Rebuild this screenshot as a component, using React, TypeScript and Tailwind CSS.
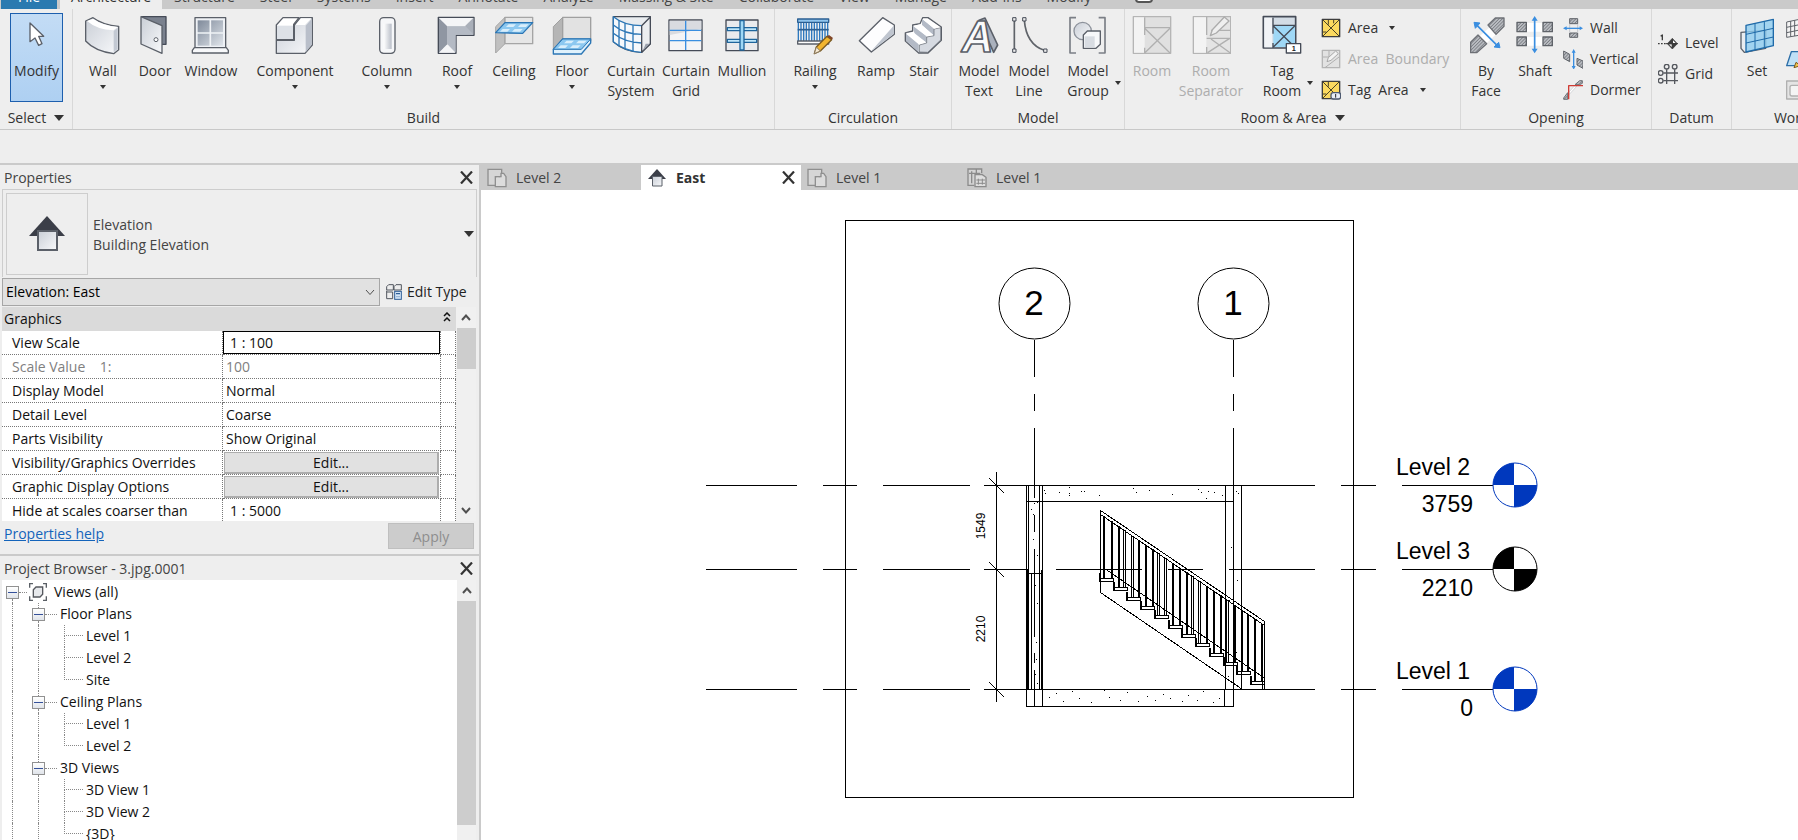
import React from 'react';

type IconProps = { children: React.ReactNode; small?: boolean };

const INK = '#5b6069';

/* Icon frames: large icons use a 120 unit grid, small ones a 60 unit grid */
function Icon({ children, small }: IconProps) {
    return (
        <svg
            className={small ? 'w-5 h-5 shrink-0' : 'w-10 h-10 shrink-0'}
            viewBox={small ? '0 0 60 60' : '0 0 120 120'}
            fill="none"
            strokeLinejoin="round"
            aria-hidden="true"
        >
            {children}
        </svg>
    );
}

function IconDefs() {
    return (
        <svg width="0" height="0" className="absolute" aria-hidden="true">
            <defs>
                <linearGradient id="face" x1="0" y1="0" x2="1" y2="1">
                    <stop offset="0" stopColor="#c9ced6" />
                    <stop offset="1" stopColor="#f8f9fb" />
                </linearGradient>
                <linearGradient id="glass" x1="0" y1="0" x2="1" y2="1">
                    <stop offset="0" stopColor="#7f8a9a" />
                    <stop offset="1" stopColor="#dfe4ea" />
                </linearGradient>
                <linearGradient id="tube" x1="0" y1="0" x2="1" y2="0">
                    <stop offset="0" stopColor="#ffffff" />
                    <stop offset="1" stopColor="#b9bec8" />
                </linearGradient>
                <pattern id="hatch" width="7" height="7" patternUnits="userSpaceOnUse" patternTransform="rotate(45)">
                    <rect width="7" height="7" fill="#b9bcc1" />
                    <rect width="2" height="7" fill="#6d7076" />
                </pattern>
            </defs>
        </svg>
    );
}

const CursorIcon = () => (
    <Icon>
        <path d="M39 24 L80 64 H65 L75 86 L65 91 L54 69 L39 80 Z" fill="#fff" stroke={INK} strokeWidth="4" />
    </Icon>
);

const WallIcon = () => (
    <Icon>
        <path d="M8 18 L30 8 Q60 30 107 34 V104 L92 116 Q35 108 8 78 Z" fill="url(#face)" stroke={INK} strokeWidth="4" />
        <path d="M12 18 L30 11 Q60 32 104 36 L91 46 Q42 44 12 18 Z" fill="#fff" />
        <path d="M92 48 V112 L104 102 V38 Z" fill="#c3c9d3" />
    </Icon>
);

const DoorIcon = () => (
    <Icon>
        <path d="M18 5 H93 V88 H80" fill="#7a818e" stroke="#454b57" strokeWidth="4" />
        <path d="M18 5 L81 32 V115 L18 87 Z" fill="url(#face)" stroke={INK} strokeWidth="4" />
        <circle cx="63" cy="74" r="6" fill="#fff" stroke={INK} strokeWidth="3" />
    </Icon>
);

const WindowIcon = () => (
    <Icon>
        <rect x="12" y="8" width="92" height="92" fill="#eef1f5" stroke={INK} strokeWidth="4" />
        <rect x="20" y="16" width="76" height="76" fill="url(#glass)" />
        <path d="M58 14 V94 M18 54 H98" stroke="#f0f3f6" strokeWidth="5" />
        <path d="M10 98 H106 L112 106 V114 H4 V106 Z" fill="#f7f8fa" stroke={INK} strokeWidth="4" />
    </Icon>
);

const ComponentIcon = () => (
    <Icon>
        <path d="M4 76 H58 V30 L76 8 H112 V90 L90 115 H4 Z" fill="url(#face)" stroke={INK} strokeWidth="4" />
        <path d="M4 30 L24 8 H72 L56 28 V74 H4 Z" fill="#fff" stroke={INK} strokeWidth="4" />
        <path d="M6 32 H54 V72 H6 Z" fill="#dde1e7" />
        <path d="M92 32 V112 L110 89 V12 Z" fill="#b9bfca" />
        <path d="M62 30 L78 10 H109 L90 30 Z" fill="#fff" />
    </Icon>
);

const ColumnIcon = () => (
    <Icon>
        <rect x="38" y="8" width="46" height="107" rx="12" fill="#f6f7f9" stroke={INK} strokeWidth="4" />
        <rect x="50" y="26" width="24" height="76" fill="url(#tube)" />
    </Icon>
);

const RoofIcon = () => (
    <Icon>
        <path d="M4 7 H111 V61 H57 V115 H4 Z" fill="#cdd1d7" stroke="#454b57" strokeWidth="4" />
        <path d="M6 9 L31 34 V88 L6 113 Z" fill="#8f96a2" />
        <path d="M6 9 H109 L84 34 H31 Z" fill="#f4f5f7" />
        <path d="M109 9 V59 L84 34 Z" fill="#a9afb9" />
        <path d="M31 34 H84 L109 59 H56 V112 L31 88 Z" fill="#b4bac4" />
        <path d="M6 113 H55 L31 88 Z" fill="#f4f5f7" />
    </Icon>
);

const CeilingIcon = () => (
    <Icon>
        <path d="M5 35 L33 7 V86 L5 114 Z" fill="#c0c0c0" stroke="#a5a5a5" strokeWidth="3" />
        <path d="M33 7 H116 V86 H33 Z" fill="#e6e6e6" stroke="#a5a5a5" strokeWidth="4" />
        <path d="M5 53 L33 23 H116 L86 55 Z" fill="#8cc8f0" stroke="#2b76b5" strokeWidth="4" />
        <path d="M44 28 H66 L58 36 H36 Z M80 28 H104 L96 36 H72 Z M26 42 H48 L40 50 H18 Z M62 42 H86 L78 50 H54 Z" fill="#d9eefb" />
    </Icon>
);

const FloorIcon = () => (
    <Icon>
        <path d="M4 35 L32 7 V75 L4 104 Z" fill="#b5b5b5" stroke="#a0a0a0" strokeWidth="3" />
        <path d="M32 7 H116 V78 H32 Z" fill="#e2e2e2" stroke="#a0a0a0" strokeWidth="4" />
        <path d="M4 103 L32 72 H116 V84 L88 117 H4 Z" fill="#dff1fc" stroke="#2b76b5" strokeWidth="4" />
        <path d="M4 103 L32 72 H116 L88 103 Z" fill="#8cc8f0" stroke="#2b76b5" strokeWidth="3" />
        <path d="M44 77 H66 L58 85 H36 Z M80 77 H104 L96 85 H72 Z M26 91 H48 L40 99 H18 Z M62 91 H86 L78 99 H54 Z" fill="#d9eefb" />
    </Icon>
);

const CurtainSystemIcon = () => (
    <Icon>
        <path d="M7 5 H118 V86 L92 112 Q40 110 7 80 Z" fill="#e9ecef" stroke="#454b57" strokeWidth="4" />
        <path d="M7 5 Q40 32 92 32 V112 Q40 108 7 80 Z" fill="#f5f8fb" stroke="#2b76b5" strokeWidth="4" />
        <path d="M24 16 V94 M42 25 V103 M66 31 V109 M7 30 Q40 58 92 58 M7 55 Q40 82 92 84" stroke="#2b76b5" strokeWidth="4" />
        <path d="M92 32 L118 6 V86 L92 112 Z" fill="#eceef0" stroke="#454b57" strokeWidth="4" />
        <path d="M95 108 L116 86 H104 Z" fill="#9aa1ad" />
    </Icon>
);

const CurtainGridIcon = () => (
    <Icon>
        <rect x="9" y="15" width="99" height="92" fill="#f4f4f6" stroke="#454b57" strokeWidth="4" />
        <path d="M11 17 H106 V42 L11 60 Z" fill="#d9dbe0" />
        <path d="M59 17 V105 M11 46 H106 M11 77 H106" stroke="#3a8ee0" strokeWidth="4" />
    </Icon>
);

const MullionIcon = () => (
    <Icon>
        <rect x="12" y="15" width="96" height="92" fill="#e9eaed" stroke="#454b57" strokeWidth="4" />
        <path d="M16 38 H104 V47 H16 Z M16 73 H104 V82 H16 Z" fill="#bfe6fa" stroke="#1f659c" strokeWidth="4" />
        <path d="M54 17 H66 V105 H54 Z" fill="#9fd8f6" stroke="#1f659c" strokeWidth="4" />
    </Icon>
);

const Pencil = () => (
    <g>
        <path d="M58 116 L64 96 L96 64 L110 74 L76 108 Z" fill="#f2b52f" stroke="#7b5a20" strokeWidth="4" />
        <path d="M58 116 L64 96 L76 108 Z" fill="#f8ead2" stroke="#8a7a60" strokeWidth="3" />
        <path d="M96 64 L102 60 L114 69 L110 74 Z" fill="#804527" />
    </g>
);

const RailingIcon = () => (
    <Icon>
        <path d="M10 24 V80 M18 24 V80 M26 24 V80 M34 24 V80 M42 24 V80 M50 24 V80 M58 24 V80 M66 24 V80 M74 24 V80 M82 24 V80 M90 24 V80 M98 24 V80" stroke="#2f79bf" strokeWidth="4" />
        <rect x="8" y="12" width="93" height="10" fill="#8fc4ee" stroke="#2b5f93" strokeWidth="4" />
        <path d="M8 44 H101" stroke="#2b5f93" strokeWidth="5" />
        <rect x="8" y="78" width="93" height="9" fill="#fff" stroke={INK} strokeWidth="4" />
        <Pencil />
    </Icon>
);

const RampIcon = () => (
    <Icon>
        <path d="M10 77 L80 8 L115 30 V58 L46 111 Z" fill="#fdfdfe" stroke={INK} strokeWidth="4" />
        <path d="M46 108 L113 32 V57 Z" fill="#bfc5cf" />
    </Icon>
);

const StairIcon = () => (
    <Icon>
        <path d="M4 54 L26 48 V30 L48 26 L56 8 H72 L112 36 V76 L72 114 H44 L4 78 Z" fill="#fff" stroke={INK} strokeWidth="4" />
        <path d="M6 56 L44 88 V111 L6 78 Z M26 32 L68 64 V84 L32 58 Z M54 12 L90 40 V62 L54 30 Z" fill="#b3bac6" />
        <path d="M46 111 V90 L68 84 V66 L90 62 V42 L110 38 V75 L71 112 Z" fill="#d6dae1" stroke={INK} strokeWidth="2" />
        <path d="M6 54 L28 52 L66 82 L46 88 Z M50 28 L88 60 L68 64 L30 32 Z M72 12 L108 37 L90 41 L56 12 Z" fill="#fff" />
    </Icon>
);

const ModelTextIcon = () => (
    <Icon>
        <path d="M60 16 L78 9 L116 90 L104 112 Z" fill="#aab1bd" stroke={INK} strokeWidth="5" />
        <text x="8" y="112" fontFamily="Liberation Sans, Arial, sans-serif" fontWeight="700" fontStyle="italic" fontSize="132" fill="#fafbfc" stroke={INK} strokeWidth="5">
            A
        </text>
    </Icon>
);

const ModelLineIcon = () => (
    <Icon>
        <path d="M16 16 V104 M46 16 Q52 88 106 106" stroke="#5f6369" strokeWidth="5" />
        <path d="M11 8 H21 V18 H11 Z M11 102 H21 V112 H11 Z M41 8 H51 V18 H41 Z M104 102 H114 V112 H104 Z" fill="#eee" stroke="#454b57" strokeWidth="3" />
    </Icon>
);

const ModelGroupIcon = () => (
    <Icon>
        <path d="M24 8 H6 V114 H24 M92 8 H111 V114 H92" stroke="#7b7f86" strokeWidth="5" />
        <circle cx="44" cy="48" r="26" fill="url(#face)" stroke="#8d929b" strokeWidth="4" />
        <path d="M46 60 L58 48 H97 V88 L84 100 H46 Z" fill="#f7f8fa" stroke={INK} strokeWidth="4" />
        <path d="M50 64 H80 V97 H50 Z" fill="#d8dce2" />
    </Icon>
);

const RoomIcon = () => (
    <Icon>
        <rect x="4" y="5" width="112" height="110" fill="#e0e0e0" stroke="#b5b5b5" strokeWidth="4" />
        <path d="M6 7 H38 V113 H6 Z" fill="#f3f3f3" />
        <path d="M38 7 V60 M38 98 V115 M38 38 H114 M38 40 L114 114 M114 40 L38 114" stroke="#b0b0b0" strokeWidth="4" />
    </Icon>
);

const RoomSeparatorIcon = () => (
    <Icon>
        <rect x="7" y="5" width="112" height="110" fill="#e4e4e4" stroke="#b5b5b5" strokeWidth="4" />
        <path d="M9 7 H46 V113 H9 Z" fill="#f3f3f3" />
        <path d="M47 5 V60 M47 96 V115 M60 46 H118 M47 70 H118 M50 113 L116 70 M60 72 L118 114" stroke="#b0b0b0" strokeWidth="4" />
        <path d="M58 62 L64 44 L100 6 L114 18 L76 54 Z" fill="#efefef" stroke="#acacac" strokeWidth="4" />
    </Icon>
);

const TagRoomIcon = () => (
    <Icon>
        <rect x="4" y="5" width="97" height="94" fill="#d3dce5" stroke="#454b57" strokeWidth="5" />
        <path d="M7 8 H31 V97 H7 Z" fill="#f1f3f6" />
        <path d="M34 32 H99 V96 H34 Z" fill="#9fd8f6" />
        <path d="M33 8 V56 M33 84 V98 M33 31 H99 M34 33 L98 96 M98 33 L34 96" stroke="#454b57" strokeWidth="4" />
        <rect x="73" y="86" width="43" height="28" fill="#fff" stroke="#454b57" strokeWidth="4" />
        <text x="95" y="108" textAnchor="middle" fontFamily="Liberation Sans, Arial, sans-serif" fontWeight="700" fontSize="22" fill="#222">
            1
        </text>
    </Icon>
);

const ByFaceIcon = () => (
    <Icon>
        <path d="M34 70 L72 36 L90 58 L56 90 Z" fill="#fff" />
        <path d="M14 82 L36 60 L62 86 L32 113 H14 Z M66 30 L88 9 H114 V34 L90 58 Z" fill="url(#hatch)" stroke="#6d7076" strokeWidth="4" />
        <path d="M30 28 L94 92" stroke="#3a8ee0" strokeWidth="5" />
        <path d="M24 22 L42 24 L28 40 Z M102 98 L84 96 L98 82 Z" fill="#3a8ee0" stroke="#3a8ee0" strokeWidth="3" />
    </Icon>
);

const ShaftIcon = () => (
    <Icon>
        <path d="M34 24 H84 V50 H34 Z M34 66 H84 V92 H34 Z" fill="#fff" />
        <path d="M6 22 H34 V50 H6 Z M84 22 H112 V50 H84 Z M6 66 H34 V92 H6 Z M84 66 H112 V92 H84 Z" fill="url(#hatch)" stroke="#5f6369" strokeWidth="4" />
        <path d="M59 10 V108" stroke="#3a8ee0" strokeWidth="5" />
        <path d="M59 3 L68 17 H50 Z M59 115 L68 101 H50 Z" fill="#3a8ee0" />
    </Icon>
);

const SetPlaneIcon = () => (
    <Icon>
        <path d="M12 52 L86 46 V100 L22 112 L12 100 Z" fill="#e8ecf0" stroke={INK} strokeWidth="4" />
        <path d="M27 31 L109 13 V92 L27 111 Z" fill="#8fcdf0" fillOpacity="0.8" stroke="#1f6aa8" strokeWidth="4" />
        <path d="M54 25 V105 M82 19 V98 M27 58 L109 40 M27 84 L109 66" stroke="#1f6aa8" strokeWidth="3" />
    </Icon>
);

const AreaIcon = () => (
    <Icon small>
        <rect x="4" y="4" width="52" height="52" fill="#fbd95f" stroke="#3d3d3d" strokeWidth="4" />
        <path d="M6 6 L54 54 M54 6 L6 54 M22 6 V20 M38 6 V16 M6 42 H16" stroke="#4a4326" strokeWidth="3" />
    </Icon>
);

const AreaBoundaryIcon = () => (
    <Icon small>
        <rect x="4" y="4" width="52" height="52" fill="#e2e2e2" stroke="#b5b5b5" strokeWidth="4" />
        <path d="M6 24 H24 M12 56 L54 24 M24 6 V24" stroke="#b0b0b0" strokeWidth="3" />
        <path d="M18 38 L22 26 L44 6 L52 14 L30 34 Z" fill="#f3f3f3" stroke="#a8a8a8" strokeWidth="3" />
    </Icon>
);

const TagAreaIcon = () => (
    <Icon small>
        <rect x="4" y="4" width="52" height="52" fill="#fbd95f" stroke="#3d3d3d" strokeWidth="4" />
        <path d="M6 6 L54 54 M54 6 L6 54 M22 6 V20 M6 42 H16" stroke="#4a4326" strokeWidth="3" />
        <rect x="30" y="38" width="29" height="19" rx="7" fill="#e8eef8" stroke="#4d5a70" strokeWidth="4" />
        <path d="M44 42 V53" stroke="#222" strokeWidth="3" />
    </Icon>
);

const WallOpeningIcon = () => (
    <Icon small>
        <path d="M20 2 H44 V17 H20 Z M20 45 H44 V58 H20 Z" fill="url(#hatch)" stroke="#5f6369" strokeWidth="3" />
        <path d="M20 18 V44 M44 18 V44" stroke="#c4c7cc" strokeWidth="3" />
        <path d="M8 31 H54" stroke="#3a8ee0" strokeWidth="4" />
        <path d="M0 31 L11 25 V37 Z M60 31 L50 25 V37 Z" fill="#3a8ee0" />
    </Icon>
);

const VerticalOpeningIcon = () => (
    <Icon small>
        <path d="M2 6 L20 16 V38 L2 28 Z M42 28 L60 36 V58 L42 48 Z" fill="url(#hatch)" stroke="#5f6369" strokeWidth="3" />
        <path d="M32 6 V56" stroke="#3a8ee0" strokeWidth="4" />
        <path d="M32 0 L38 11 H26 Z M32 62 L38 51 H26 Z" fill="#3a8ee0" />
    </Icon>
);

const DormerIcon = () => (
    <Icon small>
        <path d="M2 54 L14 38 V58 H2 Z M36 14 L50 2 H58 V10 L50 14 Z" fill="url(#hatch)" stroke="#6d7076" strokeWidth="3" />
        <path d="M18 36 L34 18 H42 L18 44 Z" fill="#fff" stroke="#c4c7cc" strokeWidth="2" />
        <path d="M17 58 V17 H60" stroke="#cf3b34" strokeWidth="4" />
    </Icon>
);

const LevelIcon = () => (
    <Icon small>
        <path d="M0 32 H26" stroke="#3d3d3d" strokeWidth="4" strokeDasharray="5 4" />
        <path d="M8 10 L13 6 V22" stroke="#3d3d3d" strokeWidth="4" />
        <path d="M43 16 L58 32 L43 48 L28 32 Z" fill="#3d3d3d" stroke="#3d3d3d" strokeWidth="2" />
        <path d="M45 22 L53 30 H45 Z M41 42 L33 34 H41 Z" fill="#fff" />
        <path d="M24 32 H60" stroke="#3d3d3d" strokeWidth="3" />
    </Icon>
);

const GridIcon = () => (
    <Icon small>
        <circle cx="26" cy="8" r="7" stroke="#55585e" strokeWidth="4" />
        <circle cx="50" cy="8" r="7" stroke="#55585e" strokeWidth="4" />
        <circle cx="8" cy="27" r="7" stroke="#55585e" strokeWidth="4" />
        <circle cx="8" cy="50" r="7" stroke="#55585e" strokeWidth="4" />
        <path d="M26 16 V60 M50 16 V60 M16 27 H60 M16 50 H60" stroke="#55585e" strokeWidth="4" />
    </Icon>
);

const ShowPlaneIcon = () => (
    <Icon small>
        <path d="M2 12 L50 2 V50 L2 58 Z M14 9 V56 M26 7 V54 M38 4 V52 M2 28 L50 18 M2 44 L50 34" fill="#f4f4f4" stroke="#5f6369" strokeWidth="3" />
    </Icon>
);

const RefPlaneIcon = () => (
    <Icon small>
        <path d="M2 50 L16 8 H58 L46 50 Z" fill="#bfe0f6" stroke="#2b6ea8" strokeWidth="4" />
        <path d="M24 56 L30 40 L44 50 Z" fill="#f2c24a" stroke="#7b5a20" strokeWidth="3" />
    </Icon>
);

const ViewerIcon = () => (
    <Icon small>
        <rect x="2" y="3" width="56" height="54" fill="#e4e4e4" stroke="#b0b0b0" strokeWidth="4" />
        <rect x="12" y="16" width="44" height="32" rx="6" fill="#f4f4f4" stroke="#b0b0b0" strokeWidth="4" />
    </Icon>
);

const Caret = ({ large }: { large?: boolean }) => (
    <svg className={large ? 'w-[10px] h-[6px]' : 'w-[6px] h-[4px]'} viewBox="0 0 6 4" preserveAspectRatio="none" aria-hidden="true">
        <path d="M0 0 H6 L3 4 Z" fill="#333" />
    </svg>
);

const CloseIcon = () => (
    <svg className="w-[13px] h-[13px]" viewBox="0 0 13 13" aria-hidden="true">
        <path d="M1 0.5 L12 12.5 M12 0.5 L1 12.5" stroke="#333" strokeWidth="2.2" />
    </svg>
);

const Chevron = ({ up, thick }: { up?: boolean; thick?: boolean }) => (
    <svg className="w-[10px] h-[7px]" viewBox="0 0 10 7" fill="none" aria-hidden="true">
        <path d={up ? 'M1 6 L5 1.5 L9 6' : 'M1 1 L5 5.5 L9 1'} stroke="#505050" strokeWidth={thick ? 2 : 1} />
    </svg>
);

/* ---------- Ribbon ---------- */

const menuTabs = ['Structure', 'Steel', 'Systems', 'Insert', 'Annotate', 'Analyze', 'Massing & Site', 'Collaborate', 'View', 'Manage', 'Add-Ins', 'Modify'];

function MenuTabs() {
    return (
        <nav className="h-[9px] shrink-0 overflow-hidden bg-[#cacaca] flex items-end text-sm leading-5 text-[#444] whitespace-nowrap">
            <a href="#file" className="ml-px w-14 bg-[#2a7ab0] text-white text-center pb-0.5">File</a>
            <a href="#architecture" className="ml-[3px] w-[102px] bg-[#eee] text-[#333] text-center pb-0.5">Architecture</a>
            <div className="flex gap-[25px] pl-3 pb-0.5">
                {menuTabs.map((tab) => (
                    <a key={tab} href="#tab">{tab}</a>
                ))}
            </div>
            <button type="button" aria-label="Ribbon options" className="ml-11 mb-1.5 w-[18px] h-3 border-2 border-[#555] rounded-sm bg-white"></button>
        </nav>
    );
}

function Panel({ title, className, children, menu }: { title: string; className: string; children: React.ReactNode; menu?: boolean }) {
    return (
        <section className={`${className} shrink-0 flex flex-col border-r border-[#d8d8d8] pt-[3px]`}>
            <div className="h-24 flex">{children}</div>
            <div className="h-5 flex items-center justify-center gap-2 text-sm leading-5 whitespace-nowrap">
                {title}
                {menu && <Caret large />}
            </div>
        </section>
    );
}

type ToolProps = { icon: React.ReactNode; label: string; second?: string; width: string; drop?: boolean; disabled?: boolean };

function Tool({ icon, label, second, width, drop, disabled }: ToolProps) {
    return (
        <button type="button" disabled={disabled} className={`${width} shrink-0 pt-[3px] flex flex-col items-center text-sm leading-5 whitespace-nowrap ${disabled ? 'text-[#adadad]' : 'text-[#333]'}`}>
            {icon}
            <span className="mt-1.5">{label}</span>
            {second && (
                <span className="relative">
                    {second}
                    {drop && <span className="absolute left-full top-0 pl-1.5 leading-none"><Caret /></span>}
                </span>
            )}
            {drop && !second && <span className="mt-1"><Caret /></span>}
        </button>
    );
}

function SmallTool({ icon, label, drop, disabled }: { icon: React.ReactNode; label: string; drop?: boolean; disabled?: boolean }) {
    return (
        <button type="button" disabled={disabled} className={`h-[31px] flex items-center gap-[7px] text-sm whitespace-pre ${disabled ? 'text-[#adadad]' : 'text-[#333]'}`}>
            {icon}
            <span>{label}</span>
            {drop && <span className="ml-1"><Caret /></span>}
        </button>
    );
}

function Ribbon() {
    return (
        <div className="h-[121px] shrink-0 flex overflow-hidden border-b border-[#c8c8c8] bg-[#eee]">
            <Panel title="Select" className="w-[73px]" menu>
                <button type="button" className="mt-px ml-[10px] w-[53px] h-[89px] pt-px flex flex-col items-center border border-[#1d5fae] bg-linear-to-b from-[#c3dcf5] to-[#aed0f2] text-sm leading-5">
                    <CursorIcon />
                    <span className="mt-1.5">Modify</span>
                </button>
            </Panel>
            <Panel title="Build" className="w-[702px]">
                <Tool icon={<WallIcon />} label="Wall" width="w-[60px]" drop />
                <Tool icon={<DoorIcon />} label="Door" width="w-11" />
                <Tool icon={<WindowIcon />} label="Window" width="w-[68px]" />
                <Tool icon={<ComponentIcon />} label="Component" width="w-[100px]" drop />
                <Tool icon={<ColumnIcon />} label="Column" width="w-[84px]" drop />
                <Tool icon={<RoofIcon />} label="Roof" width="w-14" drop />
                <Tool icon={<CeilingIcon />} label="Ceiling" width="w-[58px]" />
                <Tool icon={<FloorIcon />} label="Floor" width="w-[58px]" drop />
                <Tool icon={<CurtainSystemIcon />} label="Curtain" second="System" width="w-[60px]" />
                <Tool icon={<CurtainGridIcon />} label="Curtain" second="Grid" width="w-[50px]" />
                <Tool icon={<MullionIcon />} label="Mullion" width="w-[62px]" />
            </Panel>
            <Panel title="Circulation" className="w-[177px]">
                <Tool icon={<RailingIcon />} label="Railing" width="w-20" drop />
                <Tool icon={<RampIcon />} label="Ramp" width="w-[42px]" />
                <Tool icon={<StairIcon />} label="Stair" width="w-[54px]" />
            </Panel>
            <Panel title="Model" className="w-[173px]">
                <Tool icon={<ModelTextIcon />} label="Model" second="Text" width="w-[54px]" />
                <Tool icon={<ModelLineIcon />} label="Model" second="Line" width="w-[46px]" />
                <Tool icon={<ModelGroupIcon />} label="Model" second="Group" width="w-[72px]" drop />
            </Panel>
            <Panel title="Room &amp; Area" className="w-[336px]" menu>
                <Tool icon={<RoomIcon />} label="Room" width="w-[54px]" disabled />
                <Tool icon={<RoomSeparatorIcon />} label="Room" second="Separator" width="w-16" disabled />
                <Tool icon={<TagRoomIcon />} label="Tag" second="Room" width="w-[78px]" drop />
                <div className="flex flex-col items-start">
                    <SmallTool icon={<AreaIcon />} label="Area" drop />
                    <SmallTool icon={<AreaBoundaryIcon />} label="Area  Boundary" disabled />
                    <SmallTool icon={<TagAreaIcon />} label="Tag  Area" drop />
                </div>
            </Panel>
            <Panel title="Opening" className="w-[191px]">
                <Tool icon={<ByFaceIcon />} label="By" second="Face" width="w-[50px]" />
                <Tool icon={<ShaftIcon />} label="Shaft" width="w-12" />
                <div className="flex flex-col items-start pl-1">
                    <SmallTool icon={<WallOpeningIcon />} label="Wall" />
                    <SmallTool icon={<VerticalOpeningIcon />} label="Vertical" />
                    <SmallTool icon={<DormerIcon />} label="Dormer" />
                </div>
            </Panel>
            <Panel title="Datum" className="w-20">
                <div className="flex flex-col items-start pl-1.5 pt-[15px]">
                    <SmallTool icon={<LevelIcon />} label="Level" />
                    <SmallTool icon={<GridIcon />} label="Grid" />
                </div>
            </Panel>
            <Panel title="Work Plane" className="w-[159px]">
                <Tool icon={<SetPlaneIcon />} label="Set" width="w-[50px]" />
                <div className="flex flex-col items-start pl-1">
                    <SmallTool icon={<ShowPlaneIcon />} label="Show" />
                    <SmallTool icon={<RefPlaneIcon />} label="Ref Plane" />
                    <SmallTool icon={<ViewerIcon />} label="Viewer" />
                </div>
            </Panel>
        </div>
    );
}

/* ---------- Left dock ---------- */

const HouseIcon = ({ className }: { className: string }) => (
    <svg className={className} viewBox="0 0 36 36" aria-hidden="true">
        <path d="M18 0 L36 20 H0 Z" fill="#3b3e48" />
        <path d="M9 15 H28 V34 H9 Z" fill="url(#face)" stroke={INK} strokeWidth="2" />
    </svg>
);

const PaletteHeader = ({ title }: { title: string }) => (
    <header className="h-6 shrink-0 flex items-center justify-between pl-1 pr-[6px] text-sm leading-5 text-[#444]">
        <h2 className="pt-0.5">{title}</h2>
        <button type="button" aria-label={`Close ${title}`}><CloseIcon /></button>
    </header>
);

type Property = { label: string; value: string; kind?: 'input' | 'button' | 'muted' | 'indent' };

const properties: Property[] = [
    { label: 'View Scale', value: '1 : 100', kind: 'input' },
    { label: 'Scale Value    1:', value: '100', kind: 'muted' },
    { label: 'Display Model', value: 'Normal' },
    { label: 'Detail Level', value: 'Coarse' },
    { label: 'Parts Visibility', value: 'Show Original' },
    { label: 'Visibility/Graphics Overrides', value: 'Edit...', kind: 'button' },
    { label: 'Graphic Display Options', value: 'Edit...', kind: 'button' },
    { label: 'Hide at scales coarser than', value: '1 : 5000', kind: 'indent' },
];

function PropertyValue({ label, value, kind }: Property) {
    if (kind === 'input') {
        return <input aria-label={label} defaultValue={value} className="block w-full h-[23px] border border-black bg-white pl-1.5 text-sm" />;
    }
    if (kind === 'button') {
        return <button type="button" aria-label={`${label}: ${value}`} className="block ml-px w-[215px] h-[22px] border border-r-2 border-b-2 border-[#adadad] bg-[#e1e1e1] leading-5">{value}</button>;
    }
    return <span className={kind === 'indent' ? 'pl-[7px]' : 'pl-[3px]'}>{value}</span>;
}

function PropertiesPalette() {
    return (
        <section className="shrink-0 flex flex-col border-b-2 border-[#cacaca]">
            <PaletteHeader title="Properties" />
            <div className="mx-0.5 h-[88px] flex items-start pt-[3px] pl-[3px] pr-0.5 border border-b-0 border-[#cdcdcd]">
                <div className="w-[82px] h-[82px] flex items-center justify-center border border-[#cdcdcd]">
                    <HouseIcon className="w-9 h-9" />
                </div>
                <p className="pl-[5px] pt-[22px] flex-1 text-sm leading-5 text-[#444]">
                    Elevation
                    <br />
                    Building Elevation
                </p>
                <button type="button" aria-label="Change type" className="pt-[38px]"><Caret large /></button>
            </div>
            <div className="ml-0.5 h-[30px] flex items-start pt-px">
                <div className="grid w-[378px] items-center">
                    <select aria-label="Element" className="col-start-1 row-start-1 appearance-none h-7 border border-[#a6a6a6] bg-[#e1e1e1] pl-[3px] text-sm text-black">
                        <option>Elevation: East</option>
                    </select>
                    <span className="col-start-1 row-start-1 justify-self-end pr-[5px] pointer-events-none"><Chevron /></span>
                </div>
                <button type="button" className="ml-1.5 mt-1 flex items-center gap-[5px] text-sm leading-5 text-[#222] whitespace-nowrap">
                    <svg className="w-4 h-4" viewBox="0 0 48 48" fill="none" stroke="#51565e" strokeWidth="3" aria-hidden="true">
                        <path d="M2 8 L8 2 H22 V18 H2 Z M24 8 L30 2 H46 V18 H24 Z M2 20 V44 H20 V24 H2" />
                        <rect x="26" y="22" width="20" height="24" fill="#d5e6f7" stroke="#2f5f97" />
                        <path d="M30 29 H42 M32 38 H34 M38 38 H40" stroke="#2f5f97" strokeWidth="4" />
                    </svg>
                    Edit Type
                </button>
            </div>
            <div className="ml-0.5 mr-[3px] h-[214px] flex overflow-hidden">
                <div className="flex-1 bg-white">
                    <table className="w-full table-fixed border-separate border-spacing-0 text-sm leading-5 text-[#111]">
                        <colgroup>
                            <col />
                            <col className="w-[218px]" />
                            <col className="w-[15px]" />
                        </colgroup>
                        <thead>
                            <tr>
                                <th colSpan={2} className="h-6 p-0 pl-0.5 bg-[#dadada] text-left font-normal">Graphics</th>
                                <th className="h-6 p-0 pb-1 bg-[#dadada]">
                                    <button type="button" aria-label="Collapse Graphics" className="block">
                                        <svg className="w-3 h-[10px]" viewBox="0 0 12 10" fill="none" stroke="#111" strokeWidth="1.5" aria-hidden="true">
                                            <path d="M3 4 L6 1 L9 4 M3 9 L6 6 L9 9" />
                                        </svg>
                                    </button>
                                </th>
                            </tr>
                        </thead>
                        <tbody>
                            {properties.map((p) => (
                                <tr key={p.label} className={p.kind === 'muted' ? 'text-[#808080]' : ''}>
                                    <td className="h-6 p-0 pl-[10px] whitespace-pre border-b border-r border-dotted border-[#777]">{p.label}</td>
                                    <td className="h-6 p-0 border-b border-r border-dotted border-[#777]"><PropertyValue {...p} /></td>
                                    <td className="h-6 p-0 border-b border-r border-dotted border-[#777]"></td>
                                </tr>
                            ))}
                        </tbody>
                    </table>
                </div>
                <div className="w-5 flex flex-col items-center bg-[#f0f0f0]">
                    <button type="button" aria-label="Scroll up" className="h-[21px] flex items-center"><Chevron up thick /></button>
                    <div className="w-[19px] h-[41px] bg-[#cdcdcd]"></div>
                    <button type="button" aria-label="Scroll down" className="mt-auto h-[22px] flex items-center"><Chevron thick /></button>
                </div>
            </div>
            <footer className="h-[33px] flex items-start justify-between pl-1 pr-[5px] text-sm leading-5">
                <a href="#help" className="pt-[3px] text-[#1464bb] underline">Properties help</a>
                <button type="button" disabled className="mt-0.5 w-[86px] h-[26px] pt-0.5 border border-[#bfbfbf] bg-[#ccc] text-[#8e8e8e]">Apply</button>
            </footer>
        </section>
    );
}

const tree = [
    { name: 'Floor Plans', views: ['Level 1', 'Level 2', 'Site'] },
    { name: 'Ceiling Plans', views: ['Level 1', 'Level 2'] },
    { name: '3D Views', views: ['3D View 1', '3D View 2', '{3D}'] },
];

const Guide = ({ className }: { className: string }) => <span className={`${className} border-[#888] border-dotted`}></span>;

function Toggle({ root }: { root?: boolean }) {
    return (
        <span className="w-[13px] h-full flex flex-col items-center">
            <Guide className={root ? 'flex-1' : 'flex-1 border-l'} />
            <button type="button" aria-label="Collapse" className="w-[13px] h-[13px] flex items-center justify-center border border-[#919191] bg-linear-to-b from-white to-[#e0e4ea]">
                <span className="w-[9px] h-px bg-[#34509a]"></span>
            </button>
            <Guide className="flex-1 border-l" />
        </span>
    );
}

function ProjectBrowser() {
    return (
        <section className="flex-1 min-h-0 flex flex-col">
            <PaletteHeader title="Project Browser - 3.jpg.0001" />
            <div className="flex-1 min-h-0 flex ml-0.5 mr-[3px]">
                <div className="flex-1 overflow-hidden bg-white pl-1 pt-px text-sm text-[#111] whitespace-nowrap">
                    <div className="h-[22px] flex items-center">
                        <Toggle root />
                        <Guide className="w-2 border-t" />
                        <svg className="ml-0.5 w-[18px] h-[18px]" viewBox="0 0 54 54" fill="none" aria-hidden="true">
                            <path d="M2 14 V2 H12 M42 2 H52 V14 M52 40 V52 H42 M12 52 H2 V40" stroke="#5a5f66" strokeWidth="4" />
                            <path d="M13 20 L21 12 H41 V34 L33 42 H13 Z" fill="#e7e9ec" stroke="#55585e" strokeWidth="4" />
                        </svg>
                        <span className="pl-[7px]">Views (all)</span>
                    </div>
                    <ul>
                        {tree.map((group) => (
                            <li key={group.name}>
                                <div className="h-[22px] flex items-center pl-1.5">
                                    <Guide className="h-full w-5 border-l" />
                                    <Toggle />
                                    <Guide className="w-3 border-t" />
                                    <span className="pl-[3px]">{group.name}</span>
                                </div>
                                <ul>
                                    {group.views.map((view, i) => (
                                        <li key={view} className="h-[22px] flex items-center pl-1.5">
                                            <Guide className="h-full w-[26px] border-l" />
                                            <Guide className="h-full w-[26px] border-l" />
                                            <span className="h-full w-[19px] flex flex-col">
                                                <Guide className="h-[11px] border-l border-b" />
                                                <Guide className={i < group.views.length - 1 ? 'h-[11px] border-l' : 'h-[11px]'} />
                                            </span>
                                            <span className="pl-[3px]">{view}</span>
                                        </li>
                                    ))}
                                </ul>
                            </li>
                        ))}
                    </ul>
                </div>
                <div className="w-[19px] flex flex-col items-center bg-[#f0f0f0]">
                    <button type="button" aria-label="Scroll up" className="h-[21px] flex items-center"><Chevron up thick /></button>
                    <div className="w-full flex-1 bg-[#cdcdcd]"></div>
                    <div className="h-[15px]"></div>
                </div>
            </div>
        </section>
    );
}

/* ---------- View area ---------- */

const PlanIcon = () => (
    <svg className="w-5 h-5" viewBox="0 0 60 60" fill="none" stroke="#8f8f8f" strokeWidth="4" aria-hidden="true">
        <path d="M24 52 H3 V4 H44 V16" fill="#d6d6d6" />
        <path d="M25 26 V56 H57 V26 L50 16 H42 V26 Z" fill="#dcdcdc" />
        <path d="M25 26 H42" strokeDasharray="6 3" />
    </svg>
);

const SheetIcon = () => (
    <svg className="w-5 h-5" viewBox="0 0 60 60" fill="none" stroke="#8b8b8b" strokeWidth="4" aria-hidden="true">
        <path d="M22 52 H3 V3 H44 V16 M14 10 V46 M6 16 H40 M28 4 V14" fill="#d4d4d4" />
        <path d="M24 56 V20 H46 L57 28 V56 Z" fill="#dedede" />
        <path d="M34 32 V50 M46 32 V50 M28 36 H54 M28 46 H54" strokeWidth="3" />
    </svg>
);

const viewTabs = [
    { title: 'Level 2', icon: <PlanIcon /> },
    { title: 'East', icon: <HouseIcon className="w-5 h-[18px]" />, active: true },
    { title: 'Level 1', icon: <PlanIcon /> },
    { title: 'Level 1', icon: <SheetIcon /> },
];

const levels = [
    { name: 'Level 2', height: '3759', y: 485, color: '#0038bd' },
    { name: 'Level 3', height: '2210', y: 569, color: '#000' },
    { name: 'Level 1', height: '0', y: 689, color: '#0038bd' },
];

// x position and style (1 = solid, 2 = outlined) of every baluster
const balusters = [
    [1103, 1], [1111, 1], [1118, 1], [1124, 2], [1132, 2], [1138, 1], [1145, 1], [1152, 1],
    [1158, 2], [1165, 2], [1172, 1], [1179, 1], [1186, 1], [1192, 2], [1199, 2], [1206, 1],
    [1213, 1], [1220, 1], [1227, 2], [1234, 1], [1241, 1], [1247, 1], [1254, 1],
];

const treads = Array.from({ length: 12 }, (_, i) => ({
    x: Math.round(1099 + i * 13.73),
    y: Math.round(578 + i * 9.33),
}));

const railY = (x: number) => Math.round(514 + (x - 1100) * 0.679);
const treadY = (x: number) => treads[Math.min(11, Math.max(0, Math.floor((x - 1099) / 13.73)))].y;

const specks = [
    [1044, 490], [1045, 493], [1059, 492], [1069, 487], [1069, 493], [1069, 495], [1081, 491], [1084, 491], [1099, 495],
    [1133, 488], [1136, 492], [1149, 490], [1163, 485], [1172, 494], [1198, 489], [1201, 492], [1208, 491], [1214, 492],
    [1206, 498], [1222, 495], [1236, 491], [1238, 493], [1233, 507], [1231, 547], [1237, 580], [1229, 600], [1235, 622],
    [1236, 652], [1228, 676], [1031, 509], [1033, 514], [1034, 503], [1037, 502], [1033, 539], [1037, 555], [1035, 585],
    [1037, 603], [1034, 624], [1036, 642], [1036, 659], [1035, 674], [1037, 683], [1049, 697], [1056, 693], [1063, 701],
    [1072, 691], [1079, 698], [1091, 702], [1104, 690], [1109, 697], [1120, 700], [1127, 692], [1138, 701], [1147, 696],
    [1155, 700], [1163, 694], [1170, 698], [1182, 701], [1188, 695], [1197, 700], [1203, 691], [1213, 702], [1219, 698],
];

function ElevationDrawing() {
    return (
        <svg className="block w-full" viewBox="481 190 1317 650" role="img" aria-label="East elevation" fontFamily="Liberation Sans, Arial, sans-serif">
            <g transform="translate(0.5 0.5)" stroke="#000" fill="none" strokeLinecap="square" shapeRendering="crispEdges">
                <rect x="845" y="220" width="508" height="577" />

                {/* Level lines */}
                <path d="M706 485 H796 M823 485 H856 M883 485 H969 M984 485 H1314 M1341 485 H1375 M1402 485 H1493" />
                <path d="M706 569 H796 M823 569 H856 M883 569 H969 M984 569 H1028 M1056 569 H1141 M1168 569 H1202 M1229 569 H1314 M1341 569 H1375 M1402 569 H1493" />
                <path d="M706 689 H796 M823 689 H856 M883 689 H969 M984 689 H1314 M1341 689 H1375 M1402 689 H1493" />

                {/* Grid lines */}
                <path d="M1034 340 V376 M1034 394 V410 M1034 428 V497 M1034 515 V531 M1034 549 V636 M1034 653 V662 M1034 670 V706" />
                <path d="M1233 340 V376 M1233 394 V410 M1233 428 V706" />

                {/* Dimension string */}
                <path d="M996 472 V701" />
                <path d="M989 478 L1003 492 M989 562 L1003 576 M989 682 L1003 696" />

                {/* Walls and slabs */}
                <path d="M1026 485 V706 H1233 M1028 485 V569 M1039 485 V689 M1042 485 V706 M1026 501 H1233" />
                <path d="M1031 573 V689 M1026 573 H1042 M1225 485 V689 M1224 689 V706 M1241 485 V689" />
                <path d="M1027 570 V688 M1041 570 V688" strokeWidth="2" />

                {/* Stair */}
                <path d="M1100 592 V510 L1264 621 V689 M1262 624 V689 M1100 514 L1264 625 M1100 592 L1242 689 M1107 570 L1263 677" />
                {treads.map((t) => (
                    <g key={t.x}>
                        <rect x={t.x} y={t.y} width="14" height="3" />
                        <path d={`M${t.x} ${t.y - 5} V${t.y + 2}`} strokeWidth="2" />
                    </g>
                ))}
                {balusters.map(([x, kind]) =>
                    kind === 1 ? (
                        <path key={x} d={`M${x} ${railY(x)} V${treadY(x) - 1}`} strokeWidth="2" />
                    ) : (
                        <path key={x} d={`M${x - 1} ${railY(x)} V${treadY(x)} M${x + 1} ${railY(x)} V${treadY(x)}`} />
                    ),
                )}
                <path d="M1261 624 V679" strokeWidth="2" />
            </g>

            <g fill="#000" shapeRendering="crispEdges">
                {specks.map(([x, y]) => (
                    <rect key={`${x}-${y}`} x={x} y={y} width="1" height="1" />
                ))}
            </g>

            {/* Grid bubbles */}
            <g fill="#fff" stroke="#000">
                <circle cx="1034.5" cy="303.5" r="35.5" />
                <circle cx="1233.5" cy="303.5" r="35.5" />
            </g>
            <text x="1034" y="315" textAnchor="middle" fontSize="35">2</text>
            <text x="1233" y="315" textAnchor="middle" fontSize="35">1</text>

            <text transform="translate(985 526) rotate(-90)" textAnchor="middle" fontSize="12">1549</text>
            <text transform="translate(985 629) rotate(-90)" textAnchor="middle" fontSize="12">2210</text>

            {levels.map((l) => (
                <g key={l.name}>
                    <text x="1396" y={l.y - 10} fontSize="23">{l.name}</text>
                    <text x="1473" y={l.y + 27} textAnchor="end" fontSize="23">{l.height}</text>
                    <circle cx="1515" cy={l.y} r="22" fill="#fff" stroke={l.color} />
                    <path d={`M1514 ${l.y} H1493 A22 22 0 0 1 1514 ${l.y - 22} Z M1514 ${l.y} H1537 A22 22 0 0 1 1514 ${l.y + 22} Z`} fill={l.color} />
                </g>
            ))}
        </svg>
    );
}

function ViewArea() {
    return (
        <main className="flex-1 min-w-0 bg-white overflow-hidden">
            <nav className="h-[25px] flex bg-[#cacaca] text-sm leading-5 text-[#444]">
                {viewTabs.map((tab, i) => (
                    <div key={i} className={`w-40 flex items-center pl-[6px] pr-[6px] ${tab.active ? 'bg-white font-bold text-[#333]' : ''}`}>
                        {tab.icon}
                        <a href="#view" className="pl-[9px] flex-1">{tab.title}</a>
                        {tab.active && <button type="button" aria-label="Close view"><CloseIcon /></button>}
                    </div>
                ))}
            </nav>
            <ElevationDrawing />
        </main>
    );
}

export default function App() {
    return (
        <div className="h-screen flex flex-col overflow-hidden bg-[#eee] font-['Open_Sans',sans-serif] text-[#333]">
            <IconDefs />
            <MenuTabs />
            <Ribbon />
            <div className="h-[33px] shrink-0"></div>
            <div className="flex-1 min-h-0 flex border-t-2 border-[#cacaca]">
                <aside className="w-[481px] shrink-0 flex flex-col border-r-2 border-[#cacaca]">
                    <PropertiesPalette />
                    <ProjectBrowser />
                </aside>
                <ViewArea />
            </div>
        </div>
    );
}
